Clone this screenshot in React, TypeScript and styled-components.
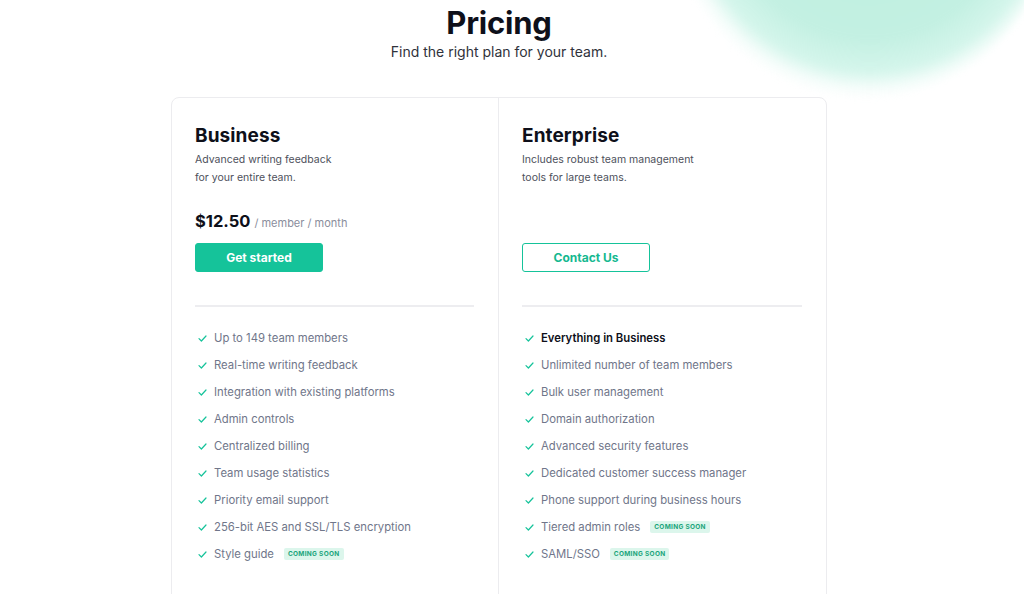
import styled, { createGlobalStyle } from 'styled-components'

const GlobalStyle = createGlobalStyle`
  html, body {
    margin: 0;
    padding: 0;
    background: #ffffff;
  }
  body {
    font-family: Inter, "Noto Sans", "Liberation Sans", sans-serif;
    color: #0e101a;
    overflow: hidden;
    -webkit-font-smoothing: antialiased;
  }
`

const Page = styled.div`
  position: relative;
  width: 1024px;
  height: 594px;
  overflow: hidden;
`

const Blob = styled.div`
  position: absolute;
  left: 672px;
  top: -270px;
  width: 380px;
  height: 368px;
  border-radius: 50%;
  background: radial-gradient(circle at 52% 45%, #bdefdf 0%, #c3f0e2 50%, rgba(205, 244, 232, 0.85) 62%, rgba(230, 250, 244, 0.4) 68%, rgba(255, 255, 255, 0) 72%);
  filter: blur(3px);
  pointer-events: none;
`

const Header = styled.header`
  position: relative;
  display: flex;
  flex-direction: column;
  align-items: center;
  padding: 4px 26px 0 0;
`

const Title = styled.h1`
  margin: 0;
  font-size: 31px;
  line-height: 38px;
  font-weight: 700;
  letter-spacing: -0.2px;
`

const Subtitle = styled.p`
  margin: 1px 0 0;
  font-size: 14px;
  line-height: 18px;
  color: #30323b;
`

const Card = styled.section`
  position: relative;
  display: grid;
  grid-template-columns: 1fr 1fr;
  width: 654px;
  height: 520px;
  margin: 36px 0 0 171px;
  border: 1px solid #ececef;
  border-radius: 8px;
  background: #ffffff;
`

const Plan = styled.div<{ $divider?: boolean }>`
  display: flex;
  flex-direction: column;
  padding: 26px 24px 0 23px;
  border-right: ${p => (p.$divider ? '1px solid #ececef' : 'none')};
`

const PlanName = styled.h2`
  margin: 0;
  font-size: 19px;
  line-height: 24px;
  font-weight: 700;
  letter-spacing: 0.1px;
`

const PlanDesc = styled.p`
  margin: 3px 0 0;
  font-size: 10.5px;
  line-height: 18px;
  color: #4d505b;
  width: 190px;
`

const PriceRow = styled.div`
  display: flex;
  align-items: baseline;
  gap: 4px;
  height: 24px;
  margin-top: 24px;
`

const Price = styled.span`
  font-size: 16.5px;
  font-weight: 700;
`

const PriceUnit = styled.span`
  font-size: 11px;
  color: #8a8d9c;
`

const Button = styled.button<{ $outline?: boolean }>`
  box-sizing: border-box;
  width: 128px;
  height: 29px;
  margin-top: 8px;
  border-radius: 3px;
  border: 1px solid #15c39a;
  background: ${p => (p.$outline ? '#ffffff' : '#15c39a')};
  color: ${p => (p.$outline ? '#15b890' : '#ffffff')};
  font-family: inherit;
  font-size: 12px;
  font-weight: 700;
  cursor: pointer;
`

const Divider = styled.hr`
  margin: 33px 0 0;
  border: none;
  height: 2px;
  background: #ededf0;
`

const Features = styled.ul`
  list-style: none;
  margin: 17px 0 0;
  padding: 0;
`

const Feature = styled.li<{ $strong?: boolean }>`
  display: flex;
  align-items: center;
  height: 27px;
  font-size: 11.3px;
  color: ${p => (p.$strong ? '#0e101a' : '#70768a')};
  font-weight: ${p => (p.$strong ? 600 : 400)};
`

const Check = styled.svg`
  flex: none;
  width: 9px;
  height: 7px;
  margin: 2px 7px 0 3px;
`

const Badge = styled.span`
  margin-left: 10px;
  padding: 2px 4px;
  border-radius: 2px;
  background: #dcf6ec;
  color: #1aa57b;
  font-size: 6.5px;
  font-weight: 700;
  letter-spacing: 0.3px;
  text-transform: uppercase;
`

type Item = { text: string; soon?: boolean; strong?: boolean }

const business: Item[] = [
  { text: 'Up to 149 team members' },
  { text: 'Real-time writing feedback' },
  { text: 'Integration with existing platforms' },
  { text: 'Admin controls' },
  { text: 'Centralized billing' },
  { text: 'Team usage statistics' },
  { text: 'Priority email support' },
  { text: '256-bit AES and SSL/TLS encryption' },
  { text: 'Style guide', soon: true },
]

const enterprise: Item[] = [
  { text: 'Everything in Business', strong: true },
  { text: 'Unlimited number of team members' },
  { text: 'Bulk user management' },
  { text: 'Domain authorization' },
  { text: 'Advanced security features' },
  { text: 'Dedicated customer success manager' },
  { text: 'Phone support during business hours' },
  { text: 'Tiered admin roles', soon: true },
  { text: 'SAML/SSO', soon: true },
]

const FeatureList = ({ items }: { items: Item[] }) => (
  <Features>
    {items.map(item => (
      <Feature key={item.text} $strong={item.strong}>
        <Check viewBox="0 0 9 7" fill="none">
          <path d="M1 3.6L3.4 6L8 1" stroke="#15c39a" strokeWidth="1.2" strokeLinecap="round" strokeLinejoin="round" />
        </Check>
        {item.text}
        {item.soon && <Badge>Coming soon</Badge>}
      </Feature>
    ))}
  </Features>
)

export default function App() {
  return (
    <Page>
      <GlobalStyle />
      <Blob />
      <Header>
        <Title>Pricing</Title>
        <Subtitle>Find the right plan for your team.</Subtitle>
      </Header>
      <Card>
        <Plan $divider>
          <PlanName>Business</PlanName>
          <PlanDesc>
            Advanced writing feedback
            <br />
            for your entire team.
          </PlanDesc>
          <PriceRow>
            <Price>$12.50</Price>
            <PriceUnit>/ member / month</PriceUnit>
          </PriceRow>
          <Button>Get started</Button>
          <Divider />
          <FeatureList items={business} />
        </Plan>
        <Plan>
          <PlanName>Enterprise</PlanName>
          <PlanDesc>
            Includes robust team management
            <br />
            tools for large teams.
          </PlanDesc>
          <PriceRow />
          <Button $outline>Contact Us</Button>
          <Divider />
          <FeatureList items={enterprise} />
        </Plan>
      </Card>
    </Page>
  )
}
